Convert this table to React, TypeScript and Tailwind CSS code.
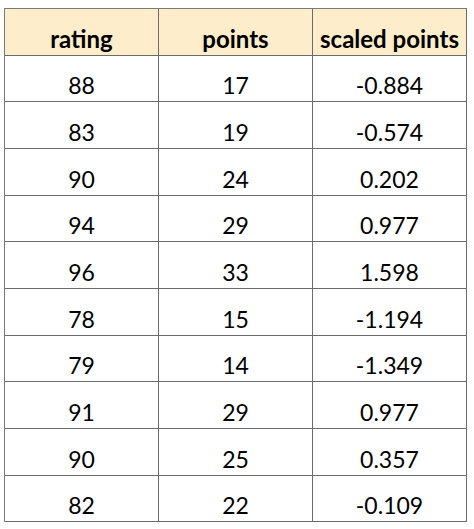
import React from "react";

const rows: [string, string, string][] = [
  ["88", "17", "-0.884"],
  ["83", "19", "-0.574"],
  ["90", "24", "0.202"],
  ["94", "29", "0.977"],
  ["96", "33", "1.598"],
  ["78", "15", "-1.194"],
  ["79", "14", "-1.349"],
  ["91", "29", "0.977"],
  ["90", "25", "0.357"],
  ["82", "22", "-0.109"],
];

const headers = ["rating", "points", "scaled points"];

export default function App() {
  return (
    <div className="w-[474px] h-[529px] bg-white pt-[8px] pl-[4px]" style={{ fontFamily: "Lato, 'Noto Sans', sans-serif" }}>
      <div className="grid grid-cols-[154px_154px_154px] w-fit border-l border-t border-[#7a7a7a] text-black">
        {headers.map((h) => (
          <div
            key={h}
            className="h-[46.67px] flex items-end justify-center pb-[4px] border-r border-b border-[#6b6b6b] bg-[#FDEDCB] text-[24px] leading-none font-bold"
          >
            {h}
          </div>
        ))}
        {rows.map((r, i) =>
          r.map((c, j) => (
            <div
              key={`${i}-${j}`}
              className="h-[46.67px] flex items-end justify-center pb-[4px] border-r border-b border-[#6b6b6b] text-[23px] leading-none"
            >
              {c}
            </div>
          ))
        )}
      </div>
    </div>
  );
}
